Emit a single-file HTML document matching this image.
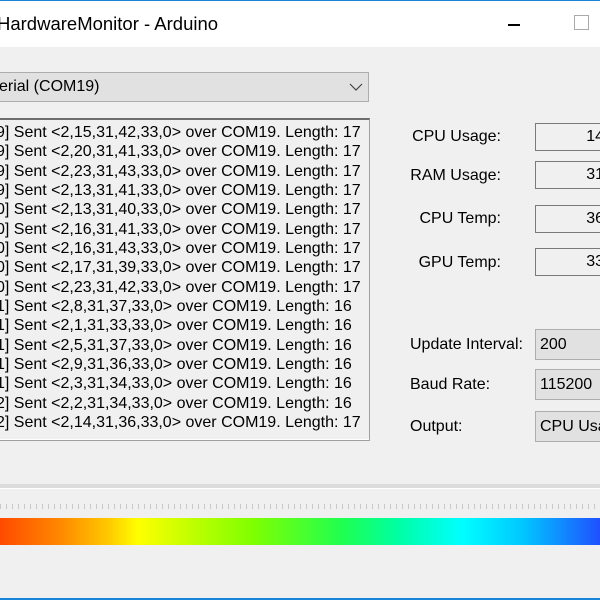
<!DOCTYPE html>
<html><head><style>
body{margin:0;width:600px;height:600px;overflow:hidden;background:#f0f0f0;font-family:"Liberation Sans",sans-serif;position:relative;color:#000}
.a{position:absolute}
.title{left:0;top:0;width:600px;height:47px;background:#fff;border-top:1px solid #1883d7;box-sizing:border-box}
.log div{height:19.33px;line-height:19.33px;font-size:16px;white-space:nowrap}
.lbl{font-size:16px;text-align:right;width:112px;white-space:nowrap}
.box{left:535px;width:70px;height:28px;border:1px solid #7a7a7a;box-sizing:border-box;background:#f0f0f0;font-size:16px;line-height:26px;text-align:right;padding-right:0}
.cb{left:535px;width:70px;height:31px;border:1px solid #adadad;box-sizing:border-box;background:#e1e1e1;font-size:16px;line-height:29px;padding-left:4px;white-space:nowrap;overflow:hidden}
</style></head><body>
<div class="a title"></div>
<div class="a" style="left:-3px;top:13px;font-size:18.5px;white-space:nowrap">HardwareMonitor - Arduino</div>
<div class="a" style="left:508px;top:24px;width:12px;height:1.5px;background:#000"></div>
<div class="a" style="left:574px;top:15px;width:13px;height:13px;border:1px solid #aaa"></div>
<div class="a" style="left:-2px;top:72px;width:371px;height:30px;border:1px solid #adadad;box-sizing:border-box;background:#e1e1e1;font-size:16px;line-height:28px">erial (COM19)</div>
<svg class="a" style="left:349px;top:82px" width="14" height="10"><path d="M1 2 L7 8 L13 2" fill="none" stroke="#444" stroke-width="1.2"/></svg>
<div class="a" style="left:-2px;top:118px;width:372px;height:323px;border:1px solid #a0a0a0;border-top:2px solid #6d6d6d;border-left:none;box-sizing:border-box;background:#f0f0f0;box-shadow:inset 0 -1px #fff"></div>
<div class="a log" style="left:-4px;top:123px">
<div>9] Sent &lt;2,15,31,42,33,0&gt; over COM19. Length: 17</div>
<div>9] Sent &lt;2,20,31,41,33,0&gt; over COM19. Length: 17</div>
<div>9] Sent &lt;2,23,31,43,33,0&gt; over COM19. Length: 17</div>
<div>9] Sent &lt;2,13,31,41,33,0&gt; over COM19. Length: 17</div>
<div>0] Sent &lt;2,13,31,40,33,0&gt; over COM19. Length: 17</div>
<div>0] Sent &lt;2,16,31,41,33,0&gt; over COM19. Length: 17</div>
<div>0] Sent &lt;2,16,31,43,33,0&gt; over COM19. Length: 17</div>
<div>0] Sent &lt;2,17,31,39,33,0&gt; over COM19. Length: 17</div>
<div>0] Sent &lt;2,23,31,42,33,0&gt; over COM19. Length: 17</div>
<div>1] Sent &lt;2,8,31,37,33,0&gt; over COM19. Length: 16</div>
<div>1] Sent &lt;2,1,31,33,33,0&gt; over COM19. Length: 16</div>
<div>1] Sent &lt;2,5,31,37,33,0&gt; over COM19. Length: 16</div>
<div>1] Sent &lt;2,9,31,36,33,0&gt; over COM19. Length: 16</div>
<div>1] Sent &lt;2,3,31,34,33,0&gt; over COM19. Length: 16</div>
<div>2] Sent &lt;2,2,31,34,33,0&gt; over COM19. Length: 16</div>
<div>2] Sent &lt;2,14,31,36,33,0&gt; over COM19. Length: 17</div>
</div>
<div class="a lbl" style="left:389px;top:128px">CPU Usage:</div>
<div class="a lbl" style="left:389px;top:167px">RAM Usage:</div>
<div class="a lbl" style="left:389px;top:210px">CPU Temp:</div>
<div class="a lbl" style="left:389px;top:254px">GPU Temp:</div>
<div class="a box" style="top:123px">14</div>
<div class="a box" style="top:161px">31</div>
<div class="a box" style="top:205px">36</div>
<div class="a box" style="top:248px">33</div>
<div class="a" style="left:410px;top:336px;font-size:16px;white-space:nowrap">Update Interval:</div>
<div class="a" style="left:410px;top:376px;font-size:16px">Baud Rate:</div>
<div class="a" style="left:410px;top:418px;font-size:16px">Output:</div>
<div class="a cb" style="top:329px">200</div>
<div class="a cb" style="top:369px">115200</div>
<div class="a cb" style="top:411px">CPU Usage</div>
<div class="a" style="left:0;top:484px;width:600px;height:4px;background:#dcdcdc;border-bottom:1px solid #fff"></div>
<div class="a" style="left:0;top:504px;width:600px;height:5px;background:repeating-linear-gradient(90deg,#c8c8c8 0 1px,transparent 1px 6px)"></div>
<div class="a" style="left:0;top:518px;width:600px;height:27px;background:linear-gradient(90deg,#ff4a00 0%,#ff8800 10%,#ffc800 18%,#ffff00 23%,#c0ff00 32%,#80ff00 42%,#20ff50 57%,#00ffa0 66%,#00ffff 77%,#00c8ff 87%,#2050ff 100%)"></div>
<div class="a" style="left:0;top:598px;width:600px;height:2px;background:#1883d7"></div>
</body></html>
